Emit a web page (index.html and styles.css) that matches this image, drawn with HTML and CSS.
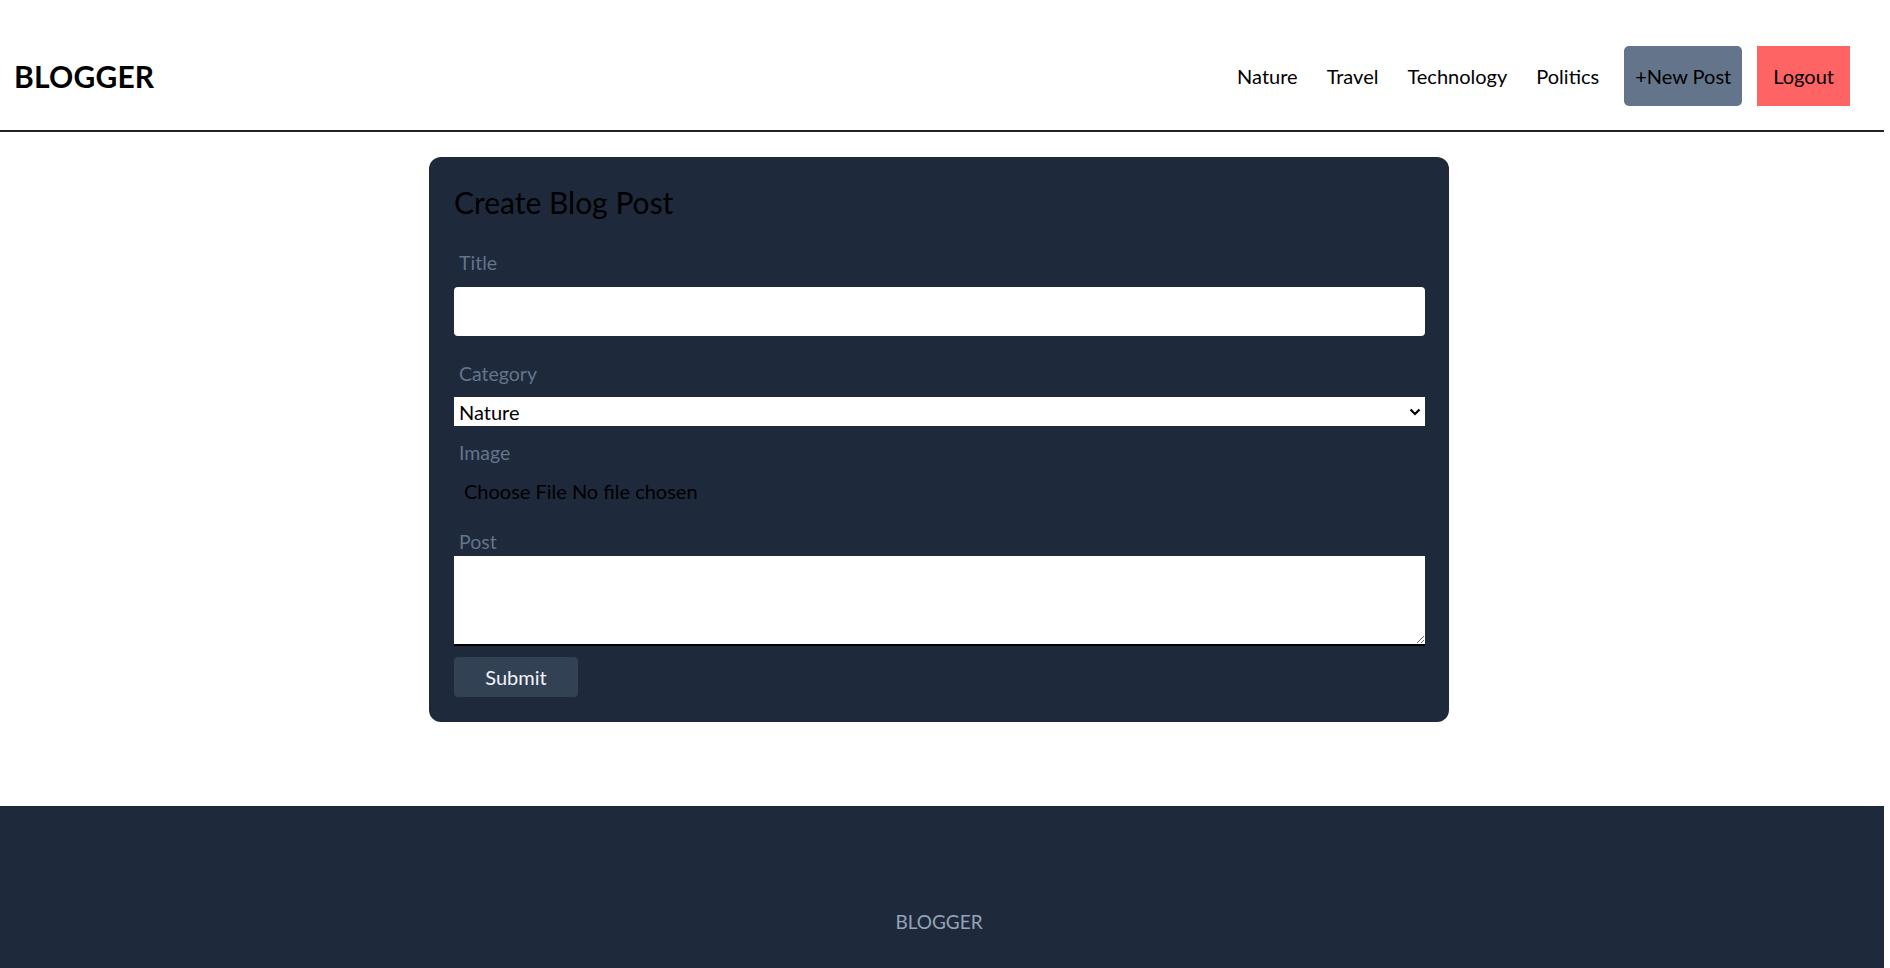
FILE: index.html
```html
<!DOCTYPE html>
<html lang="en">

<head>
	<meta charset="UTF-8">
	<title>Blogger - New Post</title>
	<link rel="stylesheet" href="styles.css">
</head>

<body>

	<header class="topbar">
		<a href="#" class="brand">BLOGGER</a>
		<nav class="menu">
			<a href="#" class="menuLink">Nature</a>
			<a href="#" class="menuLink">Travel</a>
			<a href="#" class="menuLink">Technology</a>
			<a href="#" class="menuLink">Politics</a>
			<a href="#" class="newPost">+New Post</a>
			<a href="#" class="logout">Logout</a>
		</nav>
	</header>

	<main class="container">
		<form class="postCard">
			<h2>Create Blog Post</h2>

			<label for="title" class="fieldLabel labelTitle">Title</label>
			<input type="text" id="title" class="titleInput">

			<label for="category" class="fieldLabel labelCategory">Category</label>
			<div class="selectWrap">
				<select id="category" class="categorySelect">
					<option>Nature</option>
					<option>Travel</option>
					<option>Technology</option>
					<option>Politics</option>
				</select>
				<svg class="chevron" width="12" height="8" viewBox="0 0 12 8">
					<polyline points="1.5,1.5 6,6 10.5,1.5" fill="none" stroke="#000" stroke-width="2.2" />
				</svg>
			</div>

			<label for="image" class="fieldLabel labelImage">Image</label>
			<input type="file" id="image" class="fileInput">

			<label for="post" class="fieldLabel labelPost">Post</label>
			<textarea id="post" class="postText"></textarea>

			<button type="button" class="submitBtn">Submit</button>
		</form>
	</main>

	<footer class="footer">
		BLOGGER
	</footer>

</body>

</html>
```

FILE: styles.css
```css
* {
	margin: 0;
	padding: 0;
	box-sizing: border-box;
}

body {
	font-family: Lato, 'Open Sans', sans-serif;
	color: #000;
	background-color: #fff;
	margin-right: 6px;
}

a {
	text-decoration: none;
	color: #000;
}

/* header */

.topbar {
	display: flex;
	align-items: center;
	justify-content: space-between;
	height: 132px;
	padding: 46px 34px 24px 14px;
	border-bottom: 2px solid #222;
}

.brand {
	font-size: 30px;
	font-weight: 700;
	line-height: 36px;
	letter-spacing: 0.2px;
}

.menu {
	display: flex;
	align-items: center;
}

.menuLink {
	font-size: 20px;
	line-height: 28px;
	margin-right: 29px;
}

.menu .menuLink:nth-child(4) {
	margin-right: 25px;
}

.newPost,
.logout {
	display: flex;
	align-items: center;
	height: 60px;
	font-size: 20px;
}

.newPost {
	padding: 0 11px;
	background-color: #64748b;
	border-radius: 5px;
	margin-right: 15px;
}

.logout {
	padding: 0 16px;
	background-color: #ff6464;
}

/* form card */

.container {
	display: flex;
	justify-content: center;
	padding: 25px 6px 0 0;
}

.postCard {
	display: flex;
	flex-direction: column;
	width: 1020px;
	padding: 27px 24px 25px 25px;
	background-color: #1e293b;
	border-radius: 12px;
}

.postCard h2 {
	font-size: 30px;
	font-weight: 400;
	line-height: 36px;
	color: #000;
}

.fieldLabel {
	font-size: 19.5px;
	line-height: 28px;
	color: #64748b;
	padding-left: 5px;
}

.labelTitle {
	margin-top: 29px;
}

.labelCategory {
	margin-top: 24px;
}

.labelImage {
	margin-top: 13px;
}

.labelPost {
	margin-top: 22px;
}

.titleInput {
	margin-top: 10px;
	height: 49px;
	border: none;
	border-radius: 4px;
	background-color: #fff;
	padding: 0 10px;
	font-family: inherit;
	font-size: 18px;
}

.selectWrap {
	position: relative;
	margin-top: 9px;
}

.categorySelect {
	display: block;
	width: 100%;
	height: 29px;
	border: none;
	border-radius: 0;
	background-color: #fff;
	appearance: none;
	-webkit-appearance: none;
	padding: 0 24px 0 5px;
	font-family: inherit;
	font-size: 20px;
	color: #000;
}

.chevron {
	position: absolute;
	right: 4px;
	top: 11px;
	pointer-events: none;
}

.fileInput {
	margin-top: 12px;
	height: 27px;
	padding-left: 10px;
	font-family: inherit;
	font-size: 20px;
	color: #000;
}

.fileInput::file-selector-button {
	background: none;
	border: none;
	padding: 0;
	margin-right: 5px;
	font-family: inherit;
	font-size: 20px;
	color: #000;
}

.postText {
	height: 90px;
	border: none;
	border-bottom: 2px solid #000;
	background-color: #fff;
	padding: 6px;
	font-family: inherit;
	font-size: 18px;
}

.submitBtn {
	align-self: flex-start;
	margin-top: 11px;
	width: 124px;
	height: 40px;
	border: none;
	border-radius: 4px;
	background-color: #334155;
	color: #f1f5f9;
	font-family: inherit;
	font-size: 20px;
	cursor: pointer;
}

/* footer */

.footer {
	margin-top: 84px;
	padding: 102px 6px 32px 0;
	background-color: #1e293b;
	color: #94a3b8;
	text-align: center;
	font-size: 19px;
	line-height: 28px;
}
```
